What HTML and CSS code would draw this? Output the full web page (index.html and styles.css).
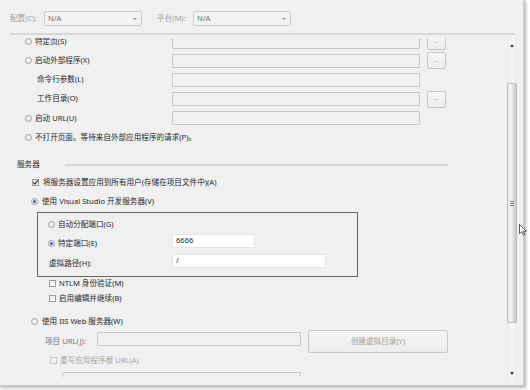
FILE: index.html
```html
<!DOCTYPE html>
<html lang="zh-CN">
<head>
<meta charset="utf-8">
<link rel="stylesheet" href="styles.css">
</head>
<body>
<div class="frame">
  <div class="topbar">
    <span class="tlabel w-cfg">配置(C):</span>
    <span class="combo"><span>N/A</span><span class="caret"></span></span>
    <span class="tlabel w-plat">平台(M):</span>
    <span class="combo"><span>N/A</span><span class="caret"></span></span>
  </div>
  <div class="main">
    <div class="viewport">
      <div class="sec1">
        <div class="row">
          <span class="lbl w147"><i class="radio"></i>特定页(S)</span>
          <span class="field f-wide"></span>
          <span class="dots">...</span>
        </div>
        <div class="row">
          <span class="lbl w147"><i class="radio"></i>启动外部程序(X)</span>
          <span class="field f-wide"></span>
          <span class="dots">...</span>
        </div>
        <div class="row">
          <span class="lbl w147 sub">命令行参数(L)</span>
          <span class="field f-wide"></span>
        </div>
        <div class="row">
          <span class="lbl w147 sub">工作目录(O)</span>
          <span class="field f-wide"></span>
          <span class="dots">...</span>
        </div>
        <div class="row">
          <span class="lbl w147"><i class="radio"></i>启动 URL(U)</span>
          <span class="field f-wide"></span>
        </div>
        <div class="row">
          <span class="lbl"><i class="radio"></i>不打开页面。等待来自外部应用程序的请求(P)。</span>
        </div>
      </div>

      <div class="srv-head">
        <span class="srv-title">服务器</span>
        <span class="srv-line"></span>
      </div>
      <div class="row cb-row">
        <span class="lbl"><i class="check"><svg viewBox="0 0 7 7" width="7" height="7"><path d="M1.3 3.4 L2.9 5.1 L5.9 1.4" fill="none" stroke="#2b2b2b" stroke-width="1.1"/></svg></i>将服务器设置应用到所有用户(存储在项目文件中)(A)</span>
      </div>
      <div class="row vs-row">
        <span class="lbl"><i class="radio on"></i>使用 Visual Studio 开发服务器(V)</span>
      </div>
      <div class="portbox">
        <div class="row pb1">
          <span class="lbl w124"><i class="radio"></i>自动分配端口(G)</span>
        </div>
        <div class="row pb2">
          <span class="lbl w124"><i class="radio on"></i>特定端口(E)</span>
          <span class="input w-port">6666</span>
        </div>
        <div class="row pb3">
          <span class="lbl w124 vp">虚拟路径(H):</span>
          <span class="input w-path">/</span>
        </div>
      </div>
      <div class="row ntlm-row">
        <span class="lbl"><i class="check"></i>NTLM 身份验证(M)</span>
      </div>
      <div class="row edit-row">
        <span class="lbl"><i class="check"></i>启用编辑并继续(B)</span>
      </div>
      <div class="row iis-row">
        <span class="lbl"><i class="radio"></i>使用 IIS Web 服务器(W)</span>
      </div>
      <div class="row url-row">
        <span class="lbl w52 dim">项目 URL(J):</span>
        <span class="field w-url"></span>
        <span class="btn">创建虚拟目录(Y)</span>
      </div>
      <div class="row rw-row">
        <span class="lbl gray"><i class="check off"></i>重写应用程序根 URL(A)</span>
      </div>
      <span class="field w-last"></span>
    </div>
    <div class="scrollbar">
      <span class="sb-btn"><i class="arrow-up"></i></span>
      <span class="sb-gap"></span>
      <span class="thumb"><i class="grip"></i></span>
      <span class="sb-fill"></span>
      <span class="sb-btn"><i class="arrow-down"></i></span>
    </div>
  </div>
</div>
<svg class="cursor" viewBox="0 0 8 12" width="8" height="12"><path d="M0.5 0.5 L0.5 9.8 L2.8 7.7 L4.4 11.2 L5.8 10.6 L4.3 7.2 L7.4 7.2 Z" fill="#fff" stroke="#333" stroke-width="0.8" stroke-linejoin="round"/></svg>
</body>
</html>
```
FILE: styles.css
```css
* { box-sizing: border-box; }
html, body { margin: 0; padding: 0; background: #fff; }
body {
  width: 530px;
  height: 390px;
  overflow: hidden;
  font-family: "Noto Sans", "Noto Sans CJK SC", sans-serif;
  font-size: 7.6px;
  line-height: 1;
  color: #262626;
}
.frame {
  width: 524px;
  height: 386px;
  background: #f0f0f0;
  border-right: 1px solid #cdcdcd;
  border-bottom: 1px solid #cdcdcd;
  box-shadow: 1px 1px 3px 1px rgba(0,0,0,0.28);
  display: flex;
  flex-direction: column;
}
.topbar {
  height: 35px;
  margin: 0 8px 0 10px;
  padding-top: 4px;
  border-bottom: 2px solid #d7d7d7;
  display: flex;
  align-items: center;
  flex: none;
}
.tlabel { color: #a0a0a0; white-space: nowrap; }
.w-cfg { width: 34px; }
.w-plat { width: 36px; margin-left: 15px; }
.combo {
  width: 98px;
  height: 15px;
  border: 1px solid #cacaca;
  border-radius: 2px;
  background: #f3f3f3;
  display: flex;
  align-items: center;
  justify-content: space-between;
  padding: 0 4px 0 3px;
  color: #707070;
}
.caret {
  width: 0; height: 0;
  border-left: 2px solid transparent;
  border-right: 2px solid transparent;
  border-top: 2px solid #8c8c8c;
}
.main {
  margin-top: 3px;
  height: 343px;
  display: flex;
  align-items: flex-start;
  flex: none;
}
.viewport {
  width: 507px;
  height: 339px;
  overflow: hidden;
  flex: none;
}
.row { display: flex; align-items: center; }
.lbl { display: flex; align-items: center; white-space: nowrap; flex: none; }
.w147 { width: 147px; }
.w124 { width: 124px; }
.w52 { width: 52px; }
.sub { padding-left: 12px; }
.dim { color: #747474; }
.gray { color: #a4a4a4; }

.radio {
  width: 7px; height: 7px;
  border-radius: 50%;
  border: 1px solid #9c9c9c;
  background: radial-gradient(circle at 50% 40%, #ffffff, #e0e0e0);
  margin-right: 3px;
  flex: none;
  display: flex;
  align-items: center;
  justify-content: center;
}
.radio.on::after {
  content: "";
  width: 3px; height: 3px;
  border-radius: 50%;
  background: #2a66c4;
}
.check {
  width: 7px; height: 7px;
  border: 1px solid #9a9a9a;
  background: linear-gradient(#e9e9e9, #ffffff);
  margin-right: 3px;
  flex: none;
  display: flex;
  align-items: center;
  justify-content: center;
}
.check svg { flex: none; }
.check.off { border-color: #c4c4c4; background: #f2f2f2; }

.field {
  display: block;
  height: 14px;
  border: 1px solid #c9c9c9;
  border-radius: 1px;
  background: #f0f0f0;
  flex: none;
}
.f-wide { width: 248px; }
.dots {
  width: 19px; height: 17px;
  margin-left: 7px;
  border: 1px solid #c4c4c4;
  border-radius: 2px;
  background: linear-gradient(#f7f7f7, #ececec);
  color: #9c9c9c;
  font-size: 6px;
  display: flex;
  align-items: center;
  justify-content: center;
  padding-bottom: 2px;
  flex: none;
}

.sec1 { margin-top: -6px; padding-left: 25px; }
.sec1 .row { height: 19.2px; }

.srv-head {
  height: 18px;
  margin-top: 8.8px;
  padding-left: 17px;
  display: flex;
  align-items: center;
}
.srv-title { width: 48px; }
.srv-line { width: 383px; height: 2px; background: #d6d6d6; }

.cb-row { height: 17px; padding-left: 32px; }
.cb-row .check { margin-right: 4px; }
.vs-row { height: 21px; padding-left: 31px; }
.vs-row .radio { margin-right: 4px; }

.portbox {
  margin-left: 37px;
  width: 321px;
  height: 65px;
  border: 1px solid #666666;
  padding: 3px 0 2px 10px;
}
.pb1 { height: 18px; }
.pb2 { height: 19px; }
.pb3 { height: 21px; }
.vp { padding-left: 1px; }
.input {
  display: flex;
  align-items: center;
  height: 14px;
  background: #ffffff;
  border: 1px solid #e4e4e4;
  padding-left: 3px;
  margin-bottom: 5px;
  color: #2a2a2a;
  flex: none;
}
.w-port { width: 83px; }
.w-path { width: 154px; }

.ntlm-row { height: 13px; padding-left: 49px; }
.edit-row { height: 17px; padding-left: 49px; }
.iis-row { height: 18px; margin-top: 6px; padding-left: 31px; }
.iis-row .radio { margin-right: 4px; }
.url-row { height: 21px; padding-left: 45px; }
.w-url { width: 204px; margin-bottom: 4px; }
.btn {
  width: 140px; height: 23px;
  margin-left: 7px;
  border: 1px solid #c7c7c7;
  border-radius: 2px;
  background: linear-gradient(#f5f5f5, #ececec);
  color: #9e9e9e;
  display: flex;
  align-items: center;
  justify-content: center;
  flex: none;
}
.rw-row { height: 18px; padding-left: 50px; }
.w-last { width: 239px; margin-left: 62px; margin-top: 2px; }

.scrollbar {
  width: 10px;
  height: 343px;
  display: flex;
  flex-direction: column;
  align-items: center;
  flex: none;
  background: linear-gradient(to right, #e8e8e8, #f5f5f5 30%, #f5f5f5 70%, #e8e8e8);
}
.sb-btn {
  width: 10px; height: 15px;
  display: flex;
  align-items: center;
  justify-content: center;
  flex: none;
}
.arrow-up {
  width: 0; height: 0;
  border-left: 2px solid transparent;
  border-right: 2px solid transparent;
  border-bottom: 3px solid #3a3a3a;
}
.arrow-down {
  width: 0; height: 0;
  border-left: 2px solid transparent;
  border-right: 2px solid transparent;
  border-top: 3px solid #3a3a3a;
}
.sb-gap { height: 30px; flex: none; }
.thumb {
  width: 10px; height: 240px;
  border: 1px solid #bcbcbc;
  border-radius: 2px;
  background: linear-gradient(to right, #e6e6e6, #f7f7f7 35%, #dddddd 70%, #c6c6c6);
  display: flex;
  align-items: center;
  justify-content: center;
  flex: none;
}
.grip {
  width: 4px; height: 5px;
  margin-right: 1px;
  background: repeating-linear-gradient(#7c7c7c 0 1px, transparent 1px 2px);
}
.sb-fill { flex: 1; }

.cursor { position: absolute; left: 519px; top: 224px; }
```
